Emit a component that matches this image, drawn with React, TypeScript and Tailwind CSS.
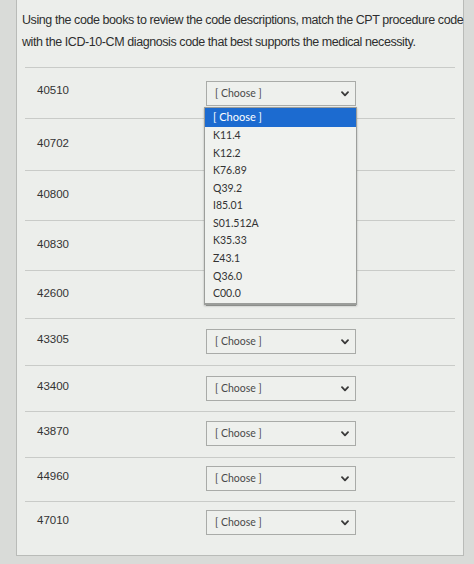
import React from "react";

const rows = [
  { code: "40510", h: "h-[51px]", pt: "pt-[13px]", lt: "mt-[0px]" },
  { code: "40702", h: "h-[52px]", pt: "pt-[12px]", lt: "mt-[3px]" },
  { code: "40800", h: "h-[50px]", pt: "pt-[11px]", lt: "mt-[3px]" },
  { code: "40830", h: "h-[50px]", pt: "pt-[11px]", lt: "mt-[3px]" },
  { code: "42600", h: "h-[48px]", pt: "pt-[10px]", lt: "mt-[3px]" },
  { code: "43305", h: "h-[47px]", pt: "pt-[10px]", lt: "mt-[1px]" },
  { code: "43400", h: "h-[46px]", pt: "pt-[10px]", lt: "mt-[1px]" },
  { code: "43870", h: "h-[46px]", pt: "pt-[9px]", lt: "mt-[1px]" },
  { code: "44960", h: "h-[44px]", pt: "pt-[8px]", lt: "mt-[1px]" },
  { code: "47010", h: "h-[54px]", pt: "pt-[8px]", lt: "mt-[1px]" },
];

const options = ["K11.4", "K12.2", "K76.89", "Q39.2", "I85.01", "S01.512A", "K35.33", "Z43.1", "Q36.0", "C00.0"];

function Chevron() {
  return (
    <svg width="8" height="6" viewBox="0 0 8 6" className="shrink-0">
      <path d="M1 1.2 L4 4.4 L7 1.2" fill="none" stroke="#3a3a3a" strokeWidth="1.8" strokeLinecap="round" strokeLinejoin="round" />
    </svg>
  );
}

function Select() {
  return (
    <div className="flex h-[25px] w-[150px] items-center justify-between border border-[#a9aba8] bg-[#eef0ed] pl-[8px] pr-[6px] font-['Lato',sans-serif] text-[10.5px] text-[#4a4a4a]">
      <span>[ Choose ]</span>
      <Chevron />
    </div>
  );
}

export default function App() {
  return (
    <div className="relative h-[564px] w-[474px] overflow-hidden bg-[#d9dbd8]">
      <div className="ml-[16px] mr-[10px] h-[556px] border-b border-l border-r border-[#b9bbb8] bg-[#eceeeb]">
        <p className="whitespace-nowrap px-[5px] pt-[9px] font-['Liberation_Sans',Arial,sans-serif] text-[12.5px] leading-[22px] tracking-[-0.42px] text-[#2e2e2e]">
          Using the code books to review the code descriptions, match the CPT procedure code
          <br />
          with the ICD-10-CM diagnosis code that best supports the medical necessity.
        </p>
        <div className="relative mt-[14px] px-[8px]">
          {rows.map((r) => (
            <div key={r.code} className={`${r.h} ${r.pt} flex items-start border-t border-[#c9cbc8]`}>
              <span className={`${r.lt} w-[181px] pl-[12px] font-['Liberation_Sans',Arial,sans-serif] text-[11.5px] leading-[18px] text-[#333]`}>
                {r.code}
              </span>
              <Select />
            </div>
          ))}
          <div className="absolute left-[187px] top-[40px] w-[153px] border border-b-2 border-[#9c9e9b] bg-[#f0f2ef] font-['Lato',sans-serif] text-[10.5px] text-[#333] shadow-[0_1px_2px_rgba(0,0,0,0.25)]">
            <div className="flex h-[19px] items-center bg-[#1c6bd0] pl-[8px] text-[11px] text-white">[ Choose ]</div>
            {options.map((o) => (
              <div key={o} className="flex h-[17.6px] items-center pl-[8px]">
                {o}
              </div>
            ))}
          </div>
        </div>
      </div>
    </div>
  );
}
